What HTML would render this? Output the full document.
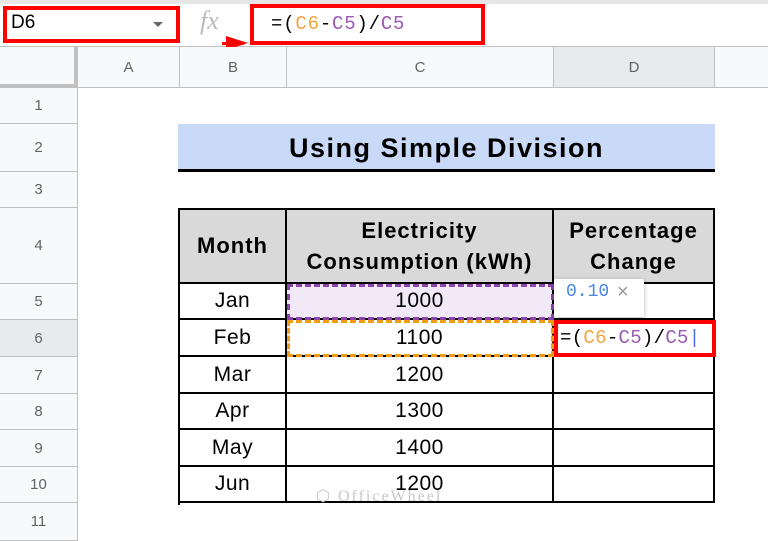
<!DOCTYPE html>
<html><head><style>
*{margin:0;padding:0;box-sizing:border-box}
body{width:768px;height:541px;position:relative;overflow:hidden;background:#fff;font-family:"Liberation Sans",Arial,sans-serif}
.a{position:absolute}
.hc{position:absolute;top:47px;height:41px;background:#f8f9fa;border-right:1px solid #c0c0c0;border-bottom:1px solid #c0c0c0;color:#5f6368;font-size:15px;text-align:center;line-height:41px}
.rh{position:absolute;left:0;width:78px;background:#f8f9fa;border-bottom:1px solid #c0c0c0;border-right:1px solid #c0c0c0;color:#5f6368;font-size:15px;text-align:center}
.c{position:absolute;font-size:21px;letter-spacing:0.5px;color:#000;text-align:center;border-right:2px solid #000;border-bottom:2px solid #000}
.h{font-size:22px;font-weight:bold;letter-spacing:1px}
.mono{font-family:"Liberation Mono",monospace}
</style></head><body>
<div class="a" style="left:0;top:0;width:768px;height:47px;background:#fff;border-top:4px solid #e6e6e6;border-bottom:1px solid #c0c0c0"></div>
<div class="a" style="left:3px;top:6px;width:177px;height:37px;border:4px solid #f00"></div>
<div class="a" style="left:11px;top:12px;font-size:19px;color:#000">D6</div>
<div class="a" style="left:153px;top:22px;border-left:5px solid transparent;border-right:5px solid transparent;border-top:5px solid #666"></div>
<div class="a" style="left:200px;top:6px;font-family:'Liberation Serif',serif;font-style:italic;font-size:26px;color:#bbb">fx</div>
<div class="a" style="left:222px;top:42px;width:22px;height:3px;background:#f00"></div>
<div class="a" style="left:226px;top:36px;border-top:7px solid transparent;border-bottom:7px solid transparent;border-left:22px solid #f00"></div>
<div class="a" style="left:250px;top:4px;width:235px;height:41px;border:4px solid #f00"></div>
<div class="a mono" style="left:271px;top:13px;font-size:19px;letter-spacing:0.8px;color:#000">=(<span style="color:#f4a340">C6</span>-<span style="color:#9b59b6">C5</span>)/<span style="color:#9b59b6">C5</span></div>

<div class="a" style="left:0;top:47px;width:78px;height:41px;background:#f8f9fa;border-right:4px solid #c0c0c0;border-bottom:4px solid #c0c0c0"></div>
<div class="hc" style="left:78px;width:102px">A</div>
<div class="hc" style="left:180px;width:107px">B</div>
<div class="hc" style="left:287px;width:267px">C</div>
<div class="hc" style="left:554px;width:161px;background:#e8eaed">D</div>
<div class="hc" style="left:715px;width:60px"></div>

<div class="rh" style="top:88px;height:36px;line-height:36px">1</div>
<div class="rh" style="top:124px;height:48px;line-height:48px">2</div>
<div class="rh" style="top:172px;height:36px;line-height:36px">3</div>
<div class="rh" style="top:208px;height:76px;line-height:76px">4</div>
<div class="rh" style="top:284px;height:36px;line-height:36px">5</div>
<div class="rh" style="top:320px;height:37px;line-height:37px;background:#e8eaed">6</div>
<div class="rh" style="top:357px;height:37px;line-height:37px">7</div>
<div class="rh" style="top:394px;height:36px;line-height:36px">8</div>
<div class="rh" style="top:430px;height:37px;line-height:37px">9</div>
<div class="rh" style="top:467px;height:36px;line-height:36px">10</div>
<div class="rh" style="top:503px;height:38px;line-height:37px">11</div>

<div class="a" style="left:178px;top:124px;width:537px;height:48px;background:#c9daf8;border-bottom:3px solid #000;font-size:27px;font-weight:bold;text-align:center;line-height:48px;letter-spacing:1.5px">Using Simple Division</div>

<div class="a" style="left:178px;top:208px;width:537px;height:297px;border-left:2px solid #000;border-top:2px solid #000"></div>
<div class="c h" style="left:180px;top:210px;width:107px;height:74px;background:#d9d9d9;line-height:72px">Month</div>
<div class="c h" style="left:287px;top:210px;width:267px;height:74px;background:#d9d9d9;line-height:31px;padding-top:5px">Electricity<br>Consumption (kWh)</div>
<div class="c h" style="left:554px;top:210px;width:161px;height:74px;background:#d9d9d9;line-height:31px;padding-top:5px">Percentage<br>Change</div>

<div class="c" style="left:180px;top:284px;width:107px;height:36px;line-height:34px">Jan</div>
<div class="c" style="left:287px;top:284px;width:267px;height:36px;line-height:34px;background:#f1e9f7">1000</div>
<div class="c" style="left:554px;top:284px;width:161px;height:36px"></div>
<div class="c" style="left:180px;top:320px;width:107px;height:37px;line-height:35px">Feb</div>
<div class="c" style="left:287px;top:320px;width:267px;height:37px;line-height:35px">1100</div>
<div class="c" style="left:554px;top:320px;width:161px;height:37px"></div>
<div class="c" style="left:180px;top:357px;width:107px;height:37px;line-height:35px">Mar</div>
<div class="c" style="left:287px;top:357px;width:267px;height:37px;line-height:35px">1200</div>
<div class="c" style="left:554px;top:357px;width:161px;height:37px"></div>
<div class="c" style="left:180px;top:394px;width:107px;height:36px;line-height:34px">Apr</div>
<div class="c" style="left:287px;top:394px;width:267px;height:36px;line-height:34px">1300</div>
<div class="c" style="left:554px;top:394px;width:161px;height:36px"></div>
<div class="c" style="left:180px;top:430px;width:107px;height:37px;line-height:35px">May</div>
<div class="c" style="left:287px;top:430px;width:267px;height:37px;line-height:35px">1400</div>
<div class="c" style="left:554px;top:430px;width:161px;height:37px"></div>
<div class="c" style="left:180px;top:467px;width:107px;height:36px;line-height:34px">Jun</div>
<div class="c" style="left:287px;top:467px;width:267px;height:36px;line-height:34px">1200</div>
<div class="c" style="left:554px;top:467px;width:161px;height:36px"></div>

<div class="a" style="left:287px;top:284px;width:267px;height:36px;border:3px dashed #8e44ad"></div>
<div class="a" style="left:287px;top:320px;width:267px;height:37px;border:3px dashed #f39c12"></div>

<div class="a" style="left:554px;top:279px;width:90px;height:38px;background:#fff;box-shadow:0 1px 4px rgba(0,0,0,0.3);border-radius:2px"></div>
<div class="a mono" style="left:566px;top:282px;font-size:18px;color:#4a86e8">0.10</div>
<div class="a" style="left:617px;top:281px;font-size:20px;color:#999">×</div>

<div class="a" style="left:554px;top:320px;width:162px;height:37px;background:#fff;border:4px solid #f00"></div>
<div class="a mono" style="left:560px;top:327px;font-size:19px;letter-spacing:0.3px;color:#000">=(<span style="color:#f4a340">C6</span>-<span style="color:#9b59b6">C5</span>)/<span style="color:#9b59b6">C5</span><span style="color:#4a6ee0">|</span></div>

<div class="a" style="left:316px;top:486px;font-family:'Liberation Serif',serif;font-size:16px;color:#c8c8c8;letter-spacing:2px">⬡ OfficeWheel</div>
</body></html>
